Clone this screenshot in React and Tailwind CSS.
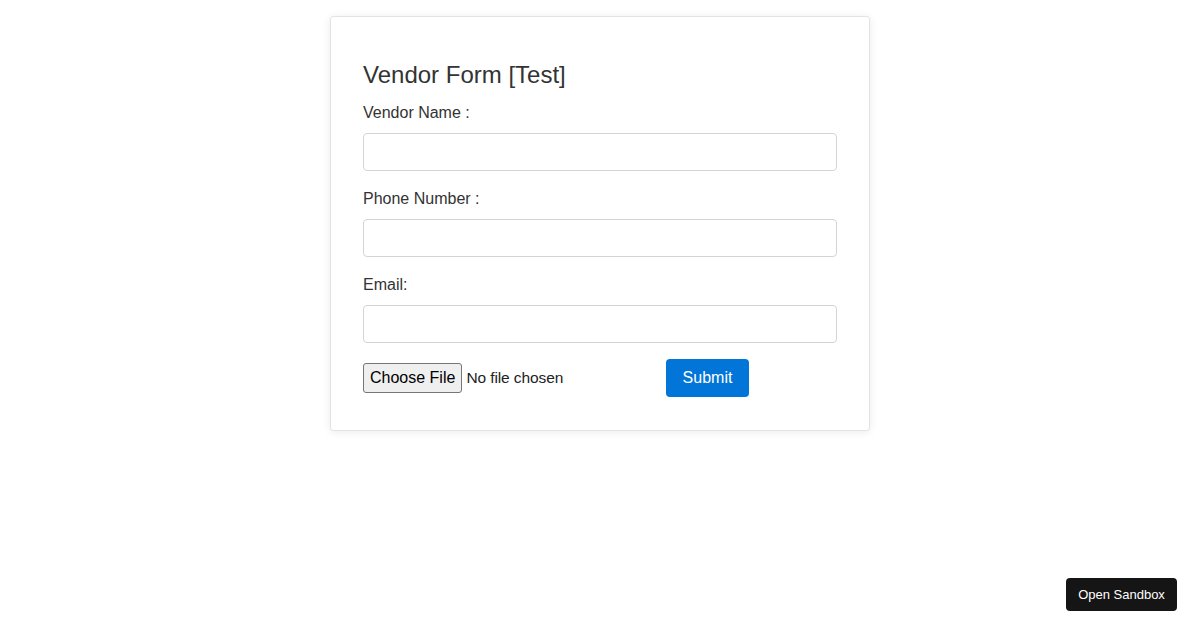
import React, { useState } from "react";

const Field = ({ label, value, onChange, first }) => (
  <div className={first ? "mt-[13px]" : "mt-[16px]"}>
    <label className="block text-[16px] leading-[23px] text-[#333]">{label}</label>
    <input
      type="text"
      value={value}
      onChange={onChange}
      className="mt-[9px] block h-[38px] w-full rounded-[4px] border border-[#d4d4d4] px-3 text-[16px] text-[#333] outline-none"
    />
  </div>
);

const App = () => {
  const [name, setName] = useState("");
  const [phone, setPhone] = useState("");
  const [email, setEmail] = useState("");

  const handleSubmit = (e) => {
    e.preventDefault();
  };

  return (
    <div className="min-h-[630px] bg-white font-['Liberation_Sans',Arial,sans-serif]">
      <div className="flex justify-center pt-4">
        <form
          onSubmit={handleSubmit}
          className="w-[540px] rounded-[3px] border border-[#e3e3e3] bg-white px-8 pb-[33px] pt-[45px] shadow-[0_1px_8px_rgba(0,0,0,0.08)]"
        >
          <h3 className="text-[24px] leading-[26px] text-[#333]">Vendor Form [Test]</h3>

          <Field label="Vendor Name :" value={name} onChange={(e) => setName(e.target.value)} first />
          <Field label="Phone Number :" value={phone} onChange={(e) => setPhone(e.target.value)} />
          <Field label="Email:" value={email} onChange={(e) => setEmail(e.target.value)} />

          <div className="mt-[16px] flex items-center">
            <input
              type="file"
              className="w-[303px] text-[15.5px] tracking-[-0.1px] text-[#222] file:mr-1 file:h-[30px] file:rounded-[3px] file:border file:border-[#767676] file:bg-[#efefef] file:px-[6px] file:text-[16px] file:tracking-normal file:text-black"
            />
            <button
              type="submit"
              className="h-[38px] w-[83px] rounded-[4px] bg-[#0275d8] text-[16px] text-white"
            >
              Submit
            </button>
          </div>
        </form>
      </div>

      {/* floating button in the corner */}
      <button className="fixed bottom-[19px] right-[23px] h-[33px] w-[111px] rounded-[4px] bg-[#151515] text-[13px] text-white">
        Open Sandbox
      </button>
    </div>
  );
};

export default App;
